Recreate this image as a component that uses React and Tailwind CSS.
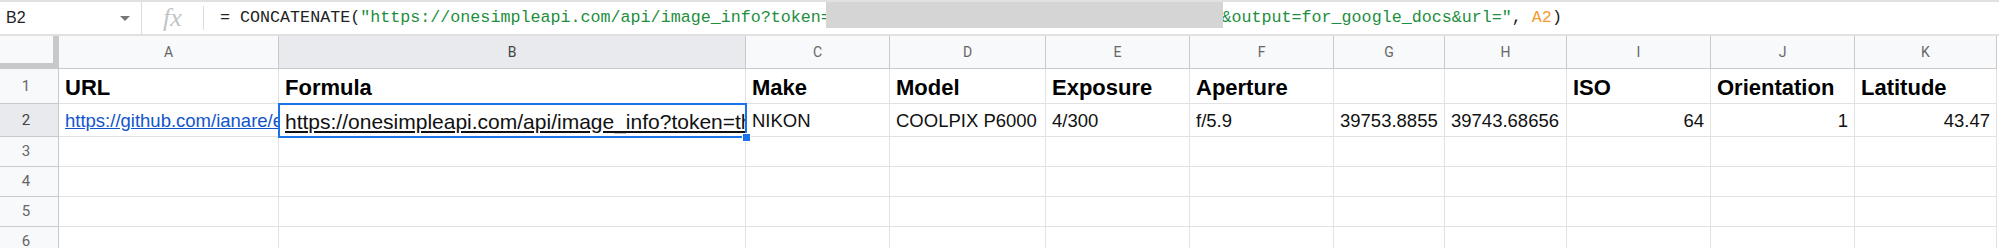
import React from 'react';

const cols = [
  { key: 'A', w: 'w-[220px]' },
  { key: 'B', w: 'w-[467px]' },
  { key: 'C', w: 'w-[144px]' },
  { key: 'D', w: 'w-[156px]' },
  { key: 'E', w: 'w-[144px]' },
  { key: 'F', w: 'w-[144px]' },
  { key: 'G', w: 'w-[111px]' },
  { key: 'H', w: 'w-[122px]' },
  { key: 'I', w: 'w-[144px]' },
  { key: 'J', w: 'w-[144px]' },
  { key: 'K', w: 'w-[142px]' },
];

const headers = ['URL', 'Formula', 'Make', 'Model', 'Exposure', 'Aperture', '', '', 'ISO', 'Orientation', 'Latitude'];

const values = [
  { text: 'https://github.com/ianare/exif-samples/raw/master/jpg/gps/DSCN0010.jpg', link: true },
  { text: 'https://onesimpleapi.com/api/image_info?token=thisisnotarealtoken', under: true },
  { text: 'NIKON' },
  { text: 'COOLPIX P6000' },
  { text: '4/300' },
  { text: 'f/5.9' },
  { text: '39753.8855' },
  { text: '39743.68656' },
  { text: '64', right: true },
  { text: '1', right: true },
  { text: '43.47', right: true },
];

const rowHeights = ['h-[35px]', 'h-[33px]', 'h-[30px]', 'h-[30px]', 'h-[30px]', 'h-[30px]'];

// 39 chars, hidden under the grey box except for the descenders
const token = 'aaaaaaaaaaaaaaaaaaaaaaaaaaaapaaaaaaag  ';

const FormulaBar = () => (
  <div className="relative flex items-center h-[36px] border-t-2 border-b-2 border-[#e1e1e1] bg-white font-['Liberation_Sans',sans-serif]">
    <div className="w-[142px] flex items-center justify-between pl-[6px] pr-[11px] h-full border-r border-[#dadce0]">
      <span className="text-[16px] text-[#222]">B2</span>
      <span className="w-0 h-0 border-l-[5px] border-r-[5px] border-t-[5px] border-l-transparent border-r-transparent border-t-[#777]" />
    </div>
    <div className="w-[62px] h-[24px] flex items-center justify-center border-r border-[#dadce0]">
      <span className="font-['Liberation_Serif',serif] italic text-[26px] leading-none text-[#c4c4c4]">fx</span>
    </div>
    <div className="pl-[16px] font-['Liberation_Mono',monospace] text-[16.7px] whitespace-pre text-[#222]">
      <span>= CONCATENATE(</span>
      <span className="text-[#1e8e3e]">{`"https://onesimpleapi.com/api/image_info?token=${token}&output=for_google_docs&url="`}</span>
      <span>, </span>
      <span className="text-[#f29a33]">A2</span>
      <span>)</span>
    </div>
    <div className="absolute left-[826px] top-0 w-[397px] h-[26px] bg-[#d5d5d5]" />
  </div>
);

export default function App() {
  return (
    <div className="relative w-[1999px] h-[248px] overflow-hidden bg-white font-['Liberation_Sans',sans-serif]">
      <FormulaBar />

      {/* column letters */}
      <div className="flex h-[33px]">
        <div className="w-[59px] shrink-0 h-full bg-[#f8f9fa] border-r-[6px] border-b-[6px] border-[#c6c8ca]" />
        {cols.map((c) => (
          <div
            key={c.key}
            className={`${c.w} shrink-0 h-full flex items-center justify-center border-r border-b border-[#c9cacb] text-[14px] font-['Roboto',sans-serif] ${
              c.key === 'B' ? 'bg-[#e8eaed] text-[#444]' : 'bg-[#f8f9fa] text-[#666]'
            }`}
          >
            {c.key}
          </div>
        ))}
      </div>

      {/* rows */}
      {rowHeights.map((h, r) => (
        <div key={r} className={`flex ${h}`}>
          <div
            className={`w-[59px] shrink-0 h-full flex items-center justify-center pr-[6px] border-r border-b border-[#c9cacb] text-[15px] font-['Roboto',sans-serif] ${
              r === 1 ? 'bg-[#e8eaed] text-[#444]' : 'bg-[#f8f9fa] text-[#666]'
            }`}
          >
            {r + 1}
          </div>
          {cols.map((c, i) => {
            if (r === 0) {
              return (
                <div key={c.key} className={`${c.w} shrink-0 h-full flex items-center pt-[3px] pl-[6px] border-r border-b border-[#e2e2e2] text-[22px] leading-none font-bold text-black overflow-hidden whitespace-nowrap`}>
                  {headers[i]}
                </div>
              );
            }
            if (r === 1) {
              const v = values[i];
              return (
                <div
                  key={c.key}
                  className={`${c.w} shrink-0 h-full flex items-center pt-[2px] border-r border-b border-[#e2e2e2] leading-none overflow-hidden whitespace-nowrap ${
                    v.right ? 'justify-end pr-[6px]' : 'pl-[6px]'
                  } ${v.link ? 'text-[#1155cc] underline' : 'text-[#111]'} ${v.under ? 'underline text-[21px]' : 'text-[18.5px]'}`}
                >
                  {v.text}
                </div>
              );
            }
            return <div key={c.key} className={`${c.w} shrink-0 h-full border-r border-b border-[#e2e2e2]`} />;
          })}
        </div>
      ))}

      {/* selection of B2 */}
      <div className="absolute left-[278px] top-[103px] w-[469px] h-[35px] border-2 border-[#1a73e8] pointer-events-none">
        <div className="absolute right-[-6px] bottom-[-6px] w-[9px] h-[9px] bg-[#1a73e8] border border-white" />
      </div>
    </div>
  );
}
